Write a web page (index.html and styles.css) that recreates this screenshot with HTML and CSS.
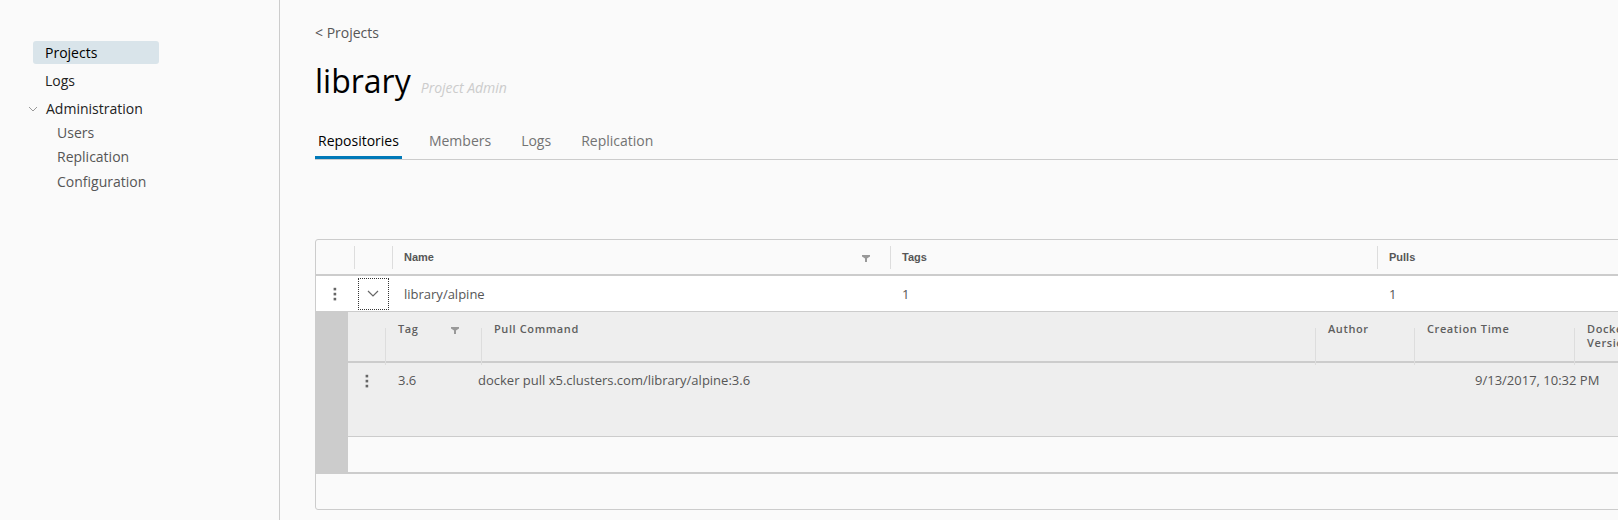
FILE: index.html
```html
<!DOCTYPE html>
<html>
<head>
<meta charset="utf-8">
<link rel="stylesheet" href="styles.css">
</head>
<body>
<aside class="sidebar">
  <a class="nav-item active">Projects</a>
  <a class="nav-item">Logs</a>
  <div class="nav-group">
    <svg class="group-caret" width="10" height="6" viewBox="0 0 10 6"><path d="M1 1 L5 5 L9 1" fill="none" stroke="#999" stroke-width="1"/></svg>
    <span>Administration</span>
  </div>
  <a class="nav-sub">Users</a>
  <a class="nav-sub">Replication</a>
  <a class="nav-sub">Configuration</a>
</aside>
<main class="main">
  <div class="back">&lt; Projects</div>
  <div class="title-row">
    <h1 class="title">library</h1>
    <span class="role">Project Admin</span>
  </div>
  <nav class="tabs">
    <span class="tab active">Repositories</span>
    <span class="tab">Members</span>
    <span class="tab">Logs</span>
    <span class="tab">Replication</span>
  </nav>
  <div class="grid">
    <div class="grid-head">
      <div class="cell c-act"></div>
      <div class="cell c-exp"><span class="sep"></span></div>
      <div class="cell c-name"><span class="sep"></span>Name
        <svg class="filter" width="8" height="7" viewBox="0 0 8 7"><path d="M0 0 H8 V1.5 L5 3.5 V7 H3 V3.5 L0 1.5 Z" fill="#999"/></svg>
      </div>
      <div class="cell c-tags"><span class="sep"></span>Tags</div>
      <div class="cell c-pulls"><span class="sep"></span>Pulls</div>
    </div>
    <div class="grid-row">
      <div class="cell c-act">
        <svg width="4" height="14" viewBox="0 0 4 14"><rect x="0.6" y="0.8" width="2.6" height="2.6" fill="#666"/><rect x="0.6" y="5.8" width="2.6" height="2.6" fill="#666"/><rect x="0.6" y="10.8" width="2.6" height="2.6" fill="#666"/></svg>
      </div>
      <div class="cell c-exp">
        <div class="exp-btn">
          <svg width="12" height="7" viewBox="0 0 12 7"><path d="M1 1 L6 6 L11 1" fill="none" stroke="#666" stroke-width="1.2"/></svg>
        </div>
      </div>
      <div class="cell c-name">library/alpine</div>
      <div class="cell c-tags"><span class="val">1</span></div>
      <div class="cell c-pulls"><span class="val">1</span></div>
    </div>
    <div class="detail">
      <div class="strip"></div>
      <div class="sub">
        <div class="sub-head">
          <div class="scell s-act"></div>
          <div class="scell s-tag"><span class="ssep"></span>Tag
            <svg class="filter" width="8" height="7" viewBox="0 0 8 7"><path d="M0 0 H8 V1.5 L5 3.5 V7 H3 V3.5 L0 1.5 Z" fill="#999"/></svg>
          </div>
          <div class="scell s-cmd"><span class="ssep"></span>Pull Command</div>
          <div class="scell s-author"><span class="ssep"></span>Author</div>
          <div class="scell s-time"><span class="ssep"></span>Creation Time</div>
          <div class="scell s-ver"><span class="ssep"></span>Docker<br>Version</div>
        </div>
        <div class="sub-row">
          <div class="scell d-act">
            <svg width="4" height="14" viewBox="0 0 4 14"><rect x="0.6" y="0.8" width="2.6" height="2.6" fill="#666"/><rect x="0.6" y="5.8" width="2.6" height="2.6" fill="#666"/><rect x="0.6" y="10.8" width="2.6" height="2.6" fill="#666"/></svg>
          </div>
          <div class="scell d-tag">3.6</div>
          <div class="scell d-cmd">docker pull x5.clusters.com/library/alpine:3.6</div>
          <div class="scell d-time">9/13/2017, 10:32 PM</div>
        </div>
        <div class="sub-foot"></div>
      </div>
    </div>
    <div class="grid-foot"></div>
  </div>
</main>
</body>
</html>
```
FILE: styles.css
```css
* { box-sizing: border-box; }
html, body { margin: 0; padding: 0; }
body {
  width: 1618px;
  height: 520px;
  overflow: hidden;
  display: flex;
  background: #fafafa;
  font-family: "Open Sans", "Lato", sans-serif;
  color: #565656;
}
.sidebar {
  flex: 0 0 280px;
  border-right: 1px solid #ccc;
  padding: 41px 0 0 33px;
  display: flex;
  flex-direction: column;
}
.nav-item {
  display: block;
  width: 126px;
  height: 23px;
  line-height: 23px;
  padding-left: 12px;
  font-size: 14px;
  color: #222;
  border-radius: 3px;
  margin-bottom: 5px;
}
.nav-item.active { background: #d9e4ea; color: #000; }
.nav-group {
  display: flex;
  align-items: center;
  height: 23px;
  font-size: 14px;
  color: #222;
  margin-left: -5px;
  margin-bottom: 1px;
}
.group-caret { margin-right: 8px; }
.nav-sub {
  display: block;
  height: 24.3px;
  line-height: 24.3px;
  padding-left: 24px;
  font-size: 14px;
  color: #565656;
}
.main {
  flex: 1 1 auto;
  padding: 23px 0 0 35px;
  min-width: 0;
}
.back {
  font-size: 14px;
  line-height: 20px;
  color: #565656;
}
.title-row {
  display: flex;
  align-items: baseline;
  margin-top: 17px;
  height: 42px;
}
.title {
  margin: 0;
  font-size: 32px;
  font-weight: 400;
  line-height: 42px;
  color: #000;
}
.role {
  font-size: 14px;
  font-style: italic;
  color: #ccc;
  margin-left: 10px;
}
.tabs {
  display: flex;
  margin-top: 21px;
  border-bottom: 1px solid #ccc;
  height: 37px;
}
.tab {
  font-size: 14px;
  line-height: 35px;
  padding: 0 3px;
  margin-right: 24px;
  color: #737373;
}
.tab.active {
  color: #000;
  box-shadow: inset 0 -3px 0 #0079b8;
}
.grid {
  margin-top: 79px;
  width: 1400px;
  border: 1px solid #ccc;
  border-radius: 3px;
  background: #fafafa;
}
.grid-head {
  display: flex;
  height: 36px;
  border-bottom: 2px solid #ccc;
  font-family: "Liberation Sans Narrow", "Liberation Sans", sans-serif;
  font-size: 11px;
  font-weight: 700;
  color: #565656;
}
.cell {
  position: relative;
  display: flex;
  align-items: center;
  padding-left: 12px;
  flex-shrink: 0;
}
.val { color: #565656; }
.sep {
  position: absolute;
  left: 0;
  top: 6px;
  bottom: 5px;
  border-left: 1px solid #ddd;
}
.c-act { width: 38px; padding-left: 0; justify-content: center; }
.c-exp { width: 38px; padding-left: 0; justify-content: center; }
.c-name { width: 498px; }
.c-tags { width: 487px; }
.c-pulls { flex: 1; }
.filter { position: absolute; right: 20px; top: 15px; }
.grid-row {
  display: flex;
  height: 36px;
  background: #fff;
  border-bottom: 1px solid #ccc;
  font-size: 13px;
  color: #565656;
}
.exp-btn {
  width: 31px;
  height: 32px;
  border: 1px dotted #333;
  display: flex;
  align-items: center;
  justify-content: center;
}
.detail {
  display: flex;
  height: 162px;
}
.strip { width: 32px; background: #ccc; flex-shrink: 0; }
.sub {
  flex: 1;
  display: flex;
  flex-direction: column;
  min-width: 0;
}
.sub-head {
  display: flex;
  height: 51px;
  background: #eee;
  border-bottom: 2px solid #ccc;
  font-size: 11px;
  letter-spacing: 0.6px;
  font-weight: 600;
  color: #5e5e5e;
}
.scell {
  position: relative;
  padding: 10px 0 0 13px;
  line-height: 14px;
  flex-shrink: 0;
}
.ssep {
  position: absolute;
  left: 0;
  top: 16px;
  bottom: -4px;
  border-left: 1px solid #ddd;
}
.sub-head .filter { right: 22px; top: 15px; }
.s-act { width: 37px; padding-left: 0; }
.s-tag { width: 96px; }
.s-cmd { width: 834px; }
.s-author { width: 99px; }
.s-time { width: 160px; }
.s-ver { flex: 1 0 auto; }
.sub-row {
  display: flex;
  height: 74px;
  background: #eee;
  border-bottom: 1px solid #ccc;
  font-size: 13px;
  color: #565656;
}
.sub-row .scell { padding: 10px 0 0 0; }
.d-act { width: 37px; display: flex; justify-content: center; padding-top: 11px !important; }
.d-tag { width: 93px; padding-left: 13px !important; }
.d-cmd { width: 997px; }
.d-time { white-space: nowrap; }
.sub-foot {
  flex: 1;
  background: #fafafa;
  border-bottom: 2px solid #ccc;
}
.grid-foot { height: 35px; }
```
